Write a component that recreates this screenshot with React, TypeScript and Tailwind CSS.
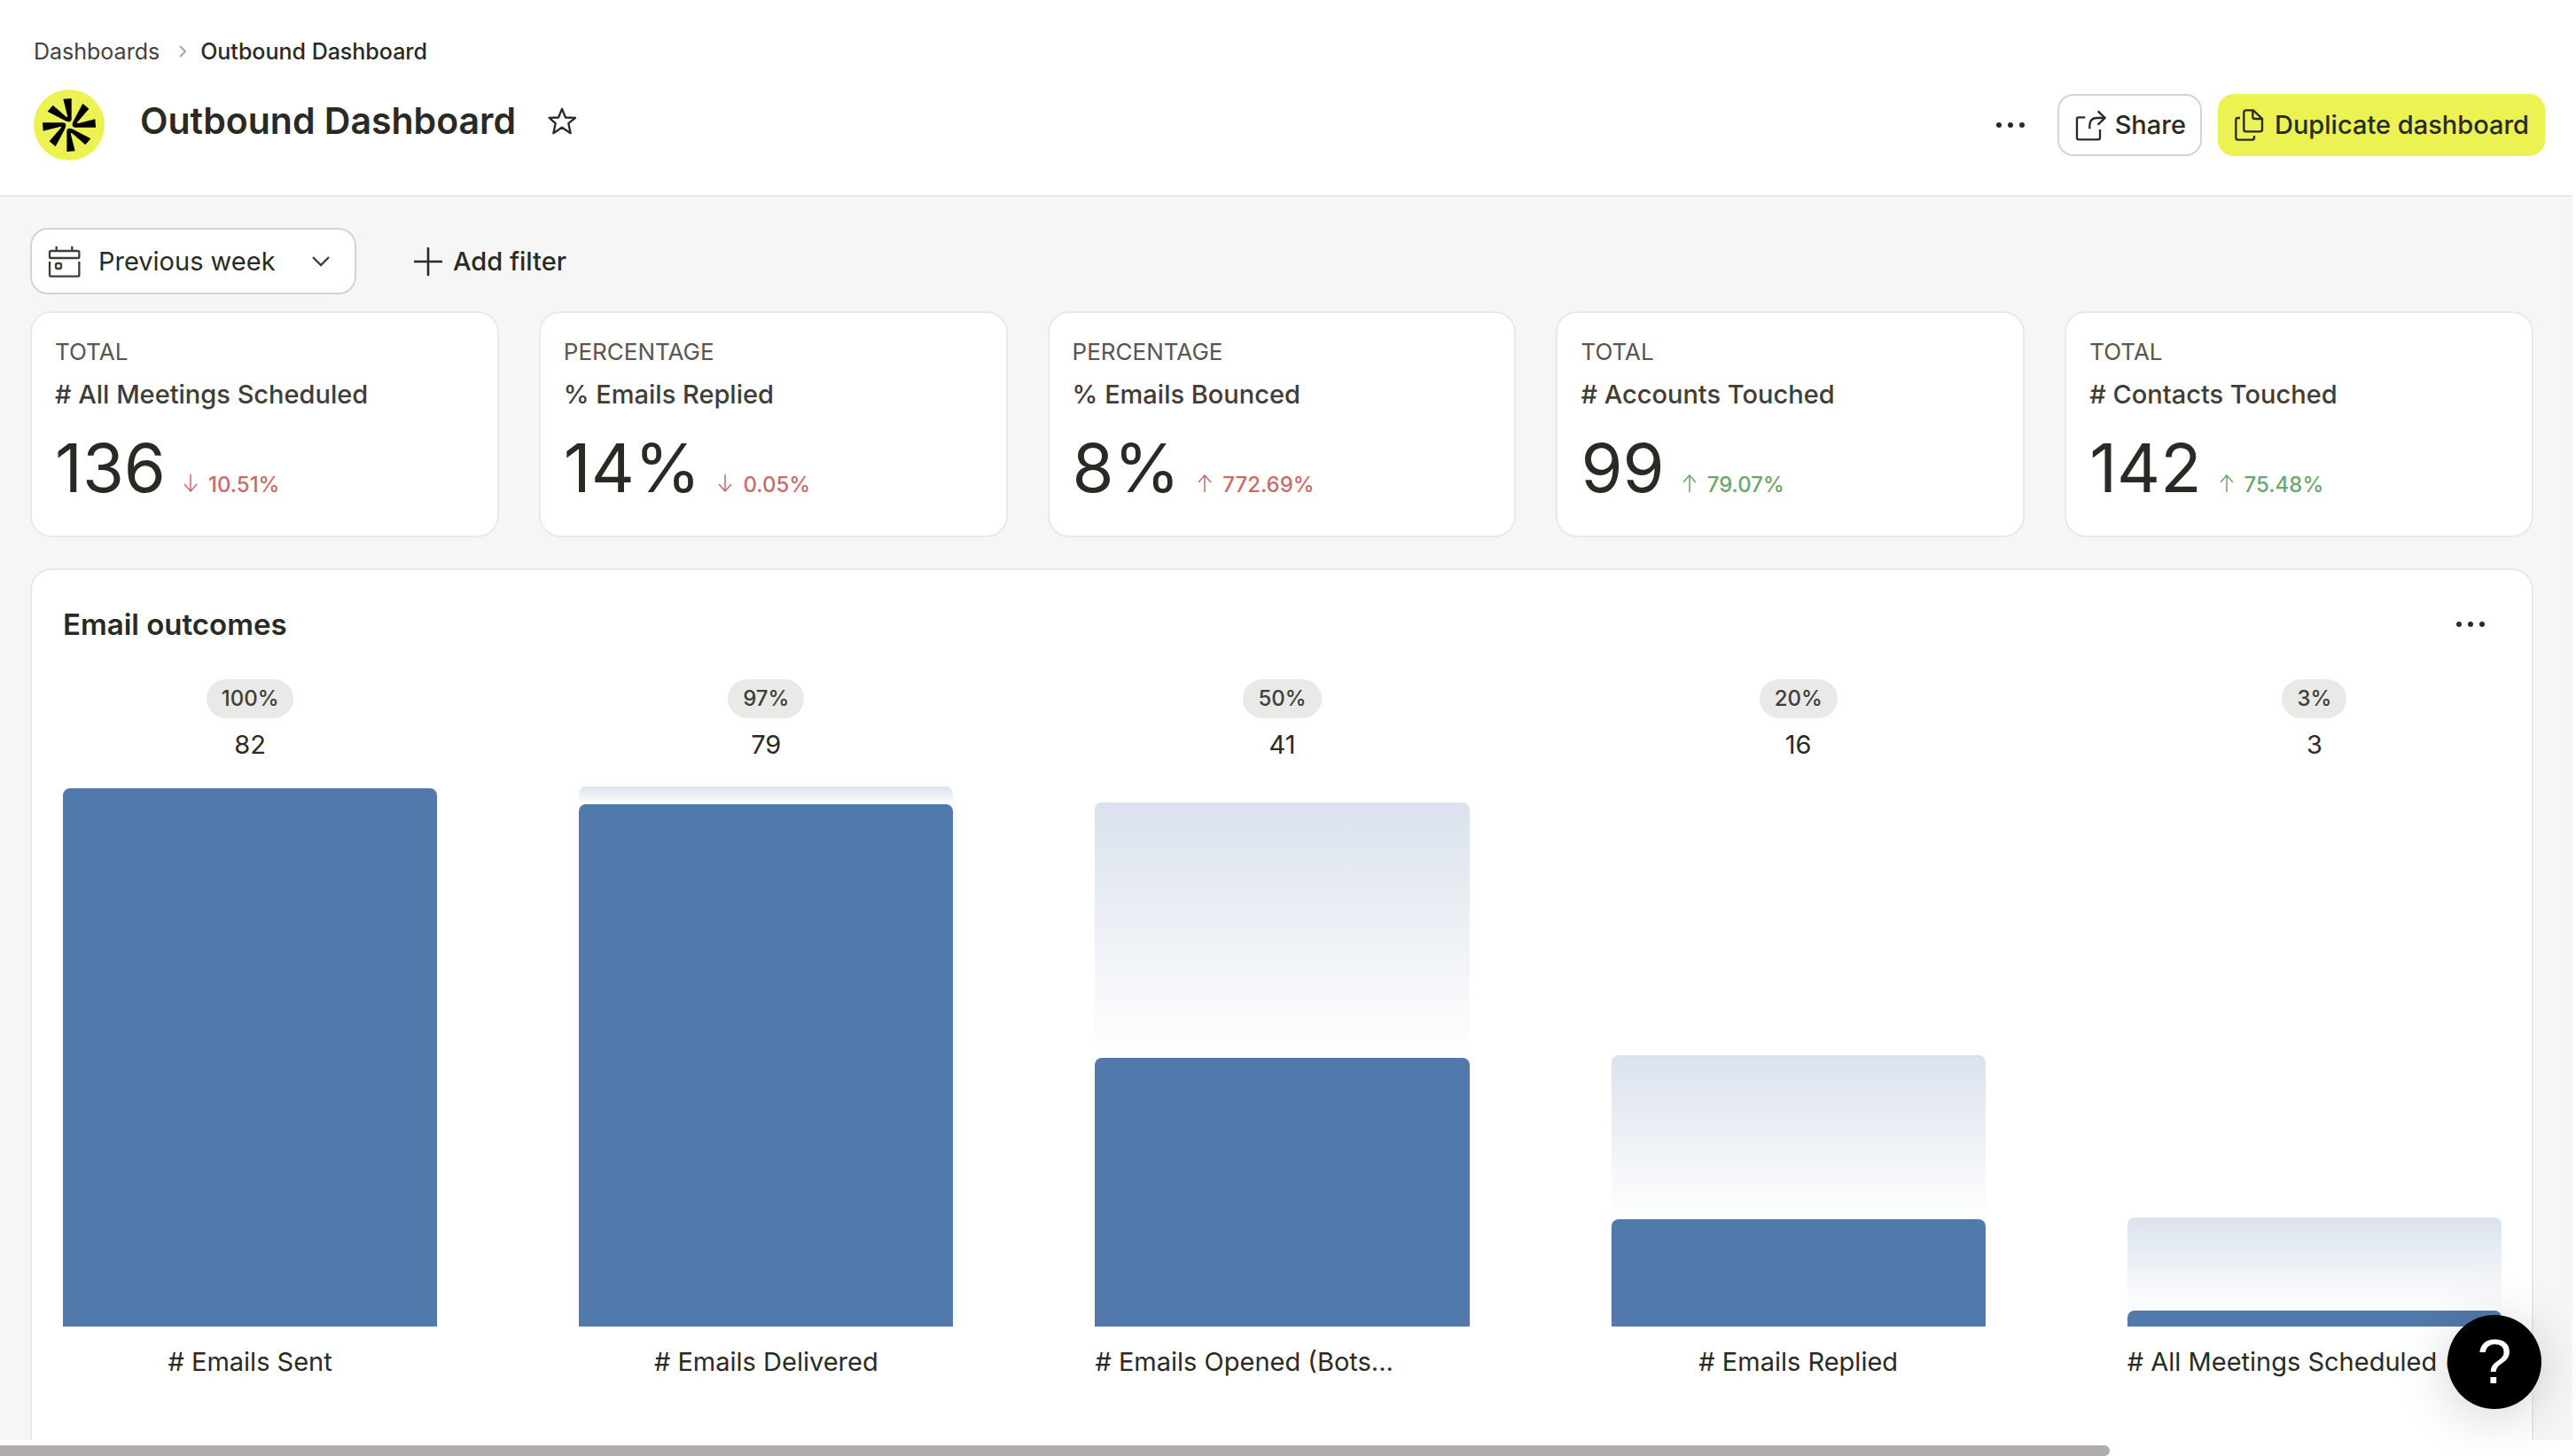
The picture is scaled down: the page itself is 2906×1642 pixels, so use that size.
import { clsx } from "clsx"

type Metric = {
  kind: string
  name: string
  value: string
  delta: string
  direction: "up" | "down"
  good: boolean
}

const metrics: Metric[] = [
  { kind: "TOTAL", name: "# All Meetings Scheduled", value: "136", delta: "10.51%", direction: "down", good: false },
  { kind: "PERCENTAGE", name: "% Emails Replied", value: "14%", delta: "0.05%", direction: "down", good: false },
  { kind: "PERCENTAGE", name: "% Emails Bounced", value: "8%", delta: "772.69%", direction: "up", good: false },
  { kind: "TOTAL", name: "# Accounts Touched", value: "99", delta: "79.07%", direction: "up", good: true },
  { kind: "TOTAL", name: "# Contacts Touched", value: "142", delta: "75.48%", direction: "up", good: true },
]

// bar = filled height, drop = faded height above it, both in px of the plot
const stages = [
  { label: "# Emails Sent", percent: "100%", count: 82, bar: 607, drop: 0, clipped: false },
  { label: "# Emails Delivered", percent: "97%", count: 79, bar: 589, drop: 20, clipped: false },
  { label: "# Emails Opened (Bots...", percent: "50%", count: 41, bar: 303, drop: 288, clipped: true },
  { label: "# Emails Replied", percent: "20%", count: 16, bar: 121, drop: 185, clipped: false },
  { label: "# All Meetings Scheduled (...", percent: "3%", count: 3, bar: 18, drop: 105, clipped: true },
]

const petal = "M154 95L182 93V161Q182 172 173 172Q168 172 160 168L101 137L119 116L164 155Q170 159 168 151Z"

function Logo() {
  return (
    <svg viewBox="54 63 240 240" className="size-20 shrink-0" aria-hidden="true">
      <circle cx="174" cy="183" r="120" fill="#ebf252" />
      {[0, 90, 180, 270].map((angle) => (
        <path key={angle} d={petal} transform={`rotate(${angle} 174 183)`} fill="#000" />
      ))}
    </svg>
  )
}

function StarIcon() {
  return (
    <svg viewBox="0 0 96 92" className="h-[31px] w-8" fill="none" stroke="currentColor" strokeWidth="7" strokeLinejoin="round">
      <path d="M48 5L60 34L93 35L70 54L77 87L48 68L19 87L26 54L5 35L36 34Z" />
    </svg>
  )
}

function ShareIcon() {
  return (
    <svg viewBox="0 0 105 105" className="size-[35px]" fill="none" stroke="currentColor" strokeWidth="7">
      <path d="M34 25H12Q6 25 6 31V94Q6 100 12 100H78Q84 100 84 94V66" />
      <path d="M49 64V52Q49 27 74 27H100M77 4L101 27L77 50" />
    </svg>
  )
}

function DuplicateIcon() {
  return (
    <svg viewBox="0 0 102 114" className="h-[38px] w-[34px]" fill="none" stroke="currentColor" strokeWidth="7">
      <path d="M21 33H14Q7 33 7 40V100Q7 107 14 107H62Q69 107 69 100V93" />
      <path d="M41 7H66L96 36V72Q96 79 89 79H41Q34 79 34 72V14Q34 7 41 7Z" />
      <path d="M64 7V29Q64 36 71 36H96" />
    </svg>
  )
}

function CalendarIcon() {
  return (
    <svg viewBox="0 0 111 114" className="h-[38px] w-[37px]" fill="none" stroke="currentColor" strokeWidth="7">
      <rect x="6" y="21" width="100" height="24" rx="4" />
      <path d="M29 5V20M82 5V20M6 57V101Q6 107 12 107H100Q106 107 106 101V57" />
      <rect x="27" y="63" width="18" height="18" rx="6" />
    </svg>
  )
}

function DotsIcon() {
  return (
    <svg viewBox="0 0 34 8" className="h-2 w-[34px]" fill="currentColor">
      <circle cx="4" cy="4" r="3" />
      <circle cx="17" cy="4" r="3" />
      <circle cx="30" cy="4" r="3" />
    </svg>
  )
}

function TrendArrow({ direction }: { direction: "up" | "down" }) {
  return (
    <svg viewBox="0 0 16 20" className={clsx("h-5 w-4", direction === "down" && "rotate-180")} fill="none" stroke="currentColor" strokeWidth="1.5">
      <path d="M8 20V1M1 9L8 1L15 9" />
    </svg>
  )
}

function Header() {
  return (
    <header className="border-b-2 border-[#e9e9e9] bg-white pt-10 pr-[31px] pb-[39px] pl-[38px]">
      <nav aria-label="Breadcrumb" className="flex items-center text-[25px] leading-9">
        <a href="#" className="text-[#45423e]">Dashboards</a>
        <svg viewBox="0 0 8 14" className="mr-4 ml-[22px] h-3.5 w-2" fill="none" stroke="#a8a5a2" strokeWidth="2">
          <path d="M1 1L7 7L1 13" />
        </svg>
        <span className="font-medium">Outbound Dashboard</span>
      </nav>
      <div className="mt-[25px] flex items-center">
        <Logo />
        <h1 className="-mt-2.5 ml-10 text-[41px] leading-[52px] font-semibold">Outbound Dashboard</h1>
        <button type="button" aria-label="Add to favorites" className="-mt-2.5 ml-9">
          <StarIcon />
        </button>
        <div className="ml-auto flex items-center">
          <button type="button" aria-label="More actions" className="mr-9 py-4">
            <DotsIcon />
          </button>
          <button type="button" className="mr-[18px] flex h-[70px] items-center gap-2.5 rounded-[18px] border-2 border-[#d4d4d4] pr-4 pl-[18px] text-[29px] font-medium">
            <ShareIcon />
            Share
          </button>
          <button type="button" className="flex h-[70px] items-center gap-3 rounded-[18px] bg-[#ebf252] px-[18px] text-[29px] font-medium">
            <DuplicateIcon />
            Duplicate dashboard
          </button>
        </div>
      </div>
    </header>
  )
}

function Filters() {
  return (
    <div className="flex items-center">
      <div className="relative h-[75px] w-[368px]">
        <select
          aria-label="Date range"
          defaultValue="previous-week"
          className="size-full appearance-none rounded-[20px] border-2 border-[#d4d4d4] bg-white pl-[75px] text-[29px]"
        >
          <option value="previous-week">Previous week</option>
          <option value="this-week">This week</option>
        </select>
        <div className="pointer-events-none absolute inset-0 flex items-center justify-between pr-[30px] pl-5 text-[#403c38]">
          <CalendarIcon />
          <svg viewBox="0 0 20 12" className="h-3 w-5" fill="none" stroke="currentColor" strokeWidth="2.4">
            <path d="M1 1L10 10L19 1" />
          </svg>
        </div>
      </div>
      <button type="button" className="ml-[65px] flex items-center gap-3 text-[29px] font-medium">
        <svg viewBox="0 0 32 32" className="size-8" stroke="currentColor" strokeWidth="2.6">
          <path d="M16 0V32M0 16H32" />
        </svg>
        Add filter
      </button>
    </div>
  )
}

function MetricCard({ metric }: { metric: Metric }) {
  return (
    <article className="rounded-3xl border-2 border-[#e9e9e9] bg-white px-[26px] pt-[26px] pb-[30px]">
      <p className="text-[26px] leading-9 text-[#5b5450]">{metric.kind}</p>
      <h2 className="mt-2.5 text-[29px] leading-10 font-medium text-[#403c38]">{metric.name}</h2>
      <div className="mt-[15px] flex items-baseline">
        <span className="text-[76px] leading-[94px]">{metric.value}</span>
        <span
          className={clsx(
            "ml-5 flex items-baseline gap-3 text-[24px] font-medium",
            metric.good ? "text-[#6fa56d]" : "text-[#c76b6b]",
          )}
        >
          <TrendArrow direction={metric.direction} />
          {metric.delta}
        </span>
      </div>
    </article>
  )
}

function Funnel() {
  return (
    <section className="mt-[35px] flex-1 rounded-t-3xl border-2 border-b-0 border-[#e9e9e9] bg-white pt-[38px] pr-[34px] pl-[35px]">
      <div className="flex items-center justify-between pr-[18px]">
        <h2 className="text-[33px] leading-[46px] font-semibold">Email outcomes</h2>
        <button type="button" aria-label="Chart options" className="py-4">
          <DotsIcon />
        </button>
      </div>
      <div className="mt-[39px] grid grid-cols-5 gap-x-40">
        {stages.map((stage) => (
          <div key={stage.label} className="flex min-w-0 flex-col items-center">
            <span className="rounded-full bg-[#e9e9e8] px-[17px] text-[24px] leading-[44px] font-medium text-[#403c38]">
              {stage.percent}
            </span>
            <span className="mt-2.5 text-[29px] leading-10">{stage.count}</span>
            <div className="mt-6 flex h-[612px] w-full flex-col justify-end">
              <div
                className="rounded-t-lg bg-linear-to-b from-[#dbe2ed] to-white"
                style={{ height: stage.drop }}
              />
              <div className="rounded-t-lg bg-[#5179ab]" style={{ height: stage.bar }} />
            </div>
            <span className={clsx("mt-5 text-[29px] leading-10 whitespace-nowrap", stage.clipped && "self-start")}>
              {stage.label}
            </span>
          </div>
        ))}
      </div>
    </section>
  )
}

export default function App() {
  return (
    <div className="flex h-screen flex-col overflow-hidden bg-white pr-1 font-['Inter',sans-serif] text-[#2a2a25]">
      <Header />
      <main className="flex min-h-0 flex-1 flex-col overflow-hidden bg-[#f6f6f6] pt-[35px] pr-11 pl-[34px]">
        <Filters />
        <div className="mt-[19px] grid grid-cols-5 gap-x-[45px]">
          {metrics.map((metric) => (
            <MetricCard key={metric.name} metric={metric} />
          ))}
        </div>
        <Funnel />
      </main>
      {/* Horizontal scroll track */}
      <div className="h-[18px] shrink-0 bg-white pt-1.5">
        <div className="h-3 w-[82%] rounded-r-full bg-[#b0aca9]" />
      </div>
      <button
        type="button"
        aria-label="Help"
        className="fixed right-[39px] bottom-[53px] flex size-[106px] items-center justify-center rounded-full bg-black font-['Liberation_Sans',sans-serif] text-[70px] leading-none text-white shadow-[0_8px_60px_rgba(0,0,0,0.18)]"
      >
        ?
      </button>
    </div>
  )
}
